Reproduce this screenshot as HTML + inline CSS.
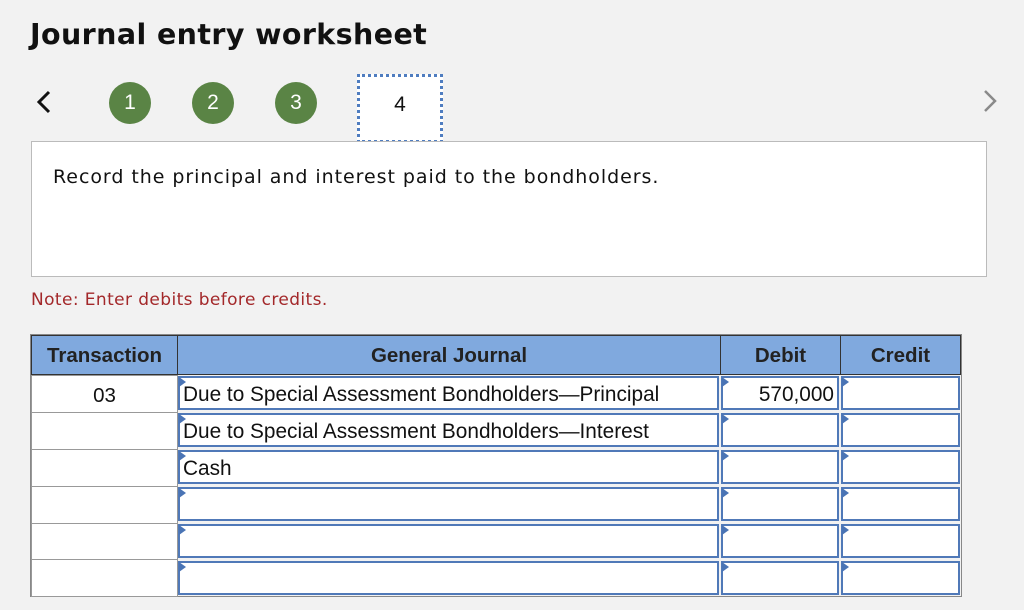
<!DOCTYPE html>
<html><head><style>
body{margin:0;width:1024px;height:610px;background:#f2f2f2;font-family:"DejaVu Sans","Liberation Sans",sans-serif;position:relative;overflow:hidden}
.a{position:absolute}
h1{position:absolute;left:30px;top:18px;margin:0;font-size:28.5px;font-weight:bold;color:#111;letter-spacing:0.4px}
.c{position:absolute;width:42px;height:42px;border-radius:50%;background:#5a8445;color:#fff;font-size:21px;line-height:42px;text-align:center;font-family:"Liberation Sans",sans-serif;top:82px}
.t{font-family:"Liberation Sans",Arial,sans-serif}
.h{position:absolute;top:335px;height:40px;background:#80a9de;border:1px solid #333;box-sizing:border-box;font:bold 20.5px "Liberation Sans",Arial,sans-serif;color:#222;text-align:center;line-height:40px}
.tr{position:absolute;left:31px;width:147px;height:38px;background:#fff;border:1px solid #999;box-sizing:border-box;font:20.5px "Liberation Sans",Arial,sans-serif;text-align:center;line-height:40px;color:#111}
.in{position:absolute;height:34px;background:#fff;border:2px solid #5079b8;box-sizing:border-box;font:20.8px "Liberation Sans",Arial,sans-serif;color:#111;line-height:34px;padding:0 3px}
.in:before{content:"";position:absolute;left:-1px;top:-1px;border-left:7px solid #4a74b5;border-top:5px solid transparent;border-bottom:5px solid transparent}
</style></head><body>
<h1>Journal entry worksheet</h1>
<svg class="a" style="left:34px;top:89px" width="20" height="26"><path d="M15 3 L5 13 L15 23" stroke="#111" stroke-width="3" fill="none"/></svg>
<div class="c" style="left:109px">1</div>
<div class="c" style="left:192px">2</div>
<div class="c" style="left:275px">3</div>
<div class="a t" style="left:357px;top:74px;width:86px;height:69px;background:#fff;border:3px dotted #4f7dc0;box-sizing:border-box;text-align:center;line-height:56px;font-size:21px;color:#111">4</div>
<svg class="a" style="left:980px;top:87px" width="20" height="28"><path d="M5 4 L15 14 L5 24" stroke="#8a8a8a" stroke-width="2.5" fill="none"/></svg>
<div class="a" style="left:31px;top:141px;width:956px;height:136px;background:#fff;border:1px solid #bbb;box-sizing:border-box"></div>
<div class="a" style="left:53px;top:166px;font-size:19px;letter-spacing:0.95px;color:#111">Record the principal and interest paid to the bondholders.</div>
<div class="a" style="left:31px;top:290px;font-size:17px;letter-spacing:0.4px;color:#a3282a">Note: Enter debits before credits.</div>
<div class="a" style="left:30px;top:334px;width:932px;height:263px;border:1px solid #888;box-sizing:border-box"></div>
<div class="h" style="left:31px;width:147px">Transaction</div>
<div class="h" style="left:177px;width:544px">General Journal</div>
<div class="h" style="left:720px;width:121px">Debit</div>
<div class="h" style="left:840px;width:121px">Credit</div>

<div class="tr" style="top:375px">03</div>
<div class="tr" style="top:412px"></div>
<div class="tr" style="top:449px"></div>
<div class="tr" style="top:486px"></div>
<div class="tr" style="top:523px"></div>
<div class="tr" style="top:559px"></div>

<div class="in" style="left:178px;top:376px;width:541px">Due to Special Assessment Bondholders—Principal</div>
<div class="in" style="left:721px;top:376px;width:118px;text-align:right">570,000</div>
<div class="in" style="left:841px;top:376px;width:119px"></div>

<div class="in" style="left:178px;top:413px;width:541px">Due to Special Assessment Bondholders—Interest</div>
<div class="in" style="left:721px;top:413px;width:118px"></div>
<div class="in" style="left:841px;top:413px;width:119px"></div>

<div class="in" style="left:178px;top:450px;width:541px">Cash</div>
<div class="in" style="left:721px;top:450px;width:118px"></div>
<div class="in" style="left:841px;top:450px;width:119px"></div>

<div class="in" style="left:178px;top:487px;width:541px"></div>
<div class="in" style="left:721px;top:487px;width:118px"></div>
<div class="in" style="left:841px;top:487px;width:119px"></div>

<div class="in" style="left:178px;top:524px;width:541px"></div>
<div class="in" style="left:721px;top:524px;width:118px"></div>
<div class="in" style="left:841px;top:524px;width:119px"></div>

<div class="in" style="left:178px;top:561px;width:541px"></div>
<div class="in" style="left:721px;top:561px;width:118px"></div>
<div class="in" style="left:841px;top:561px;width:119px"></div>
</body></html>
